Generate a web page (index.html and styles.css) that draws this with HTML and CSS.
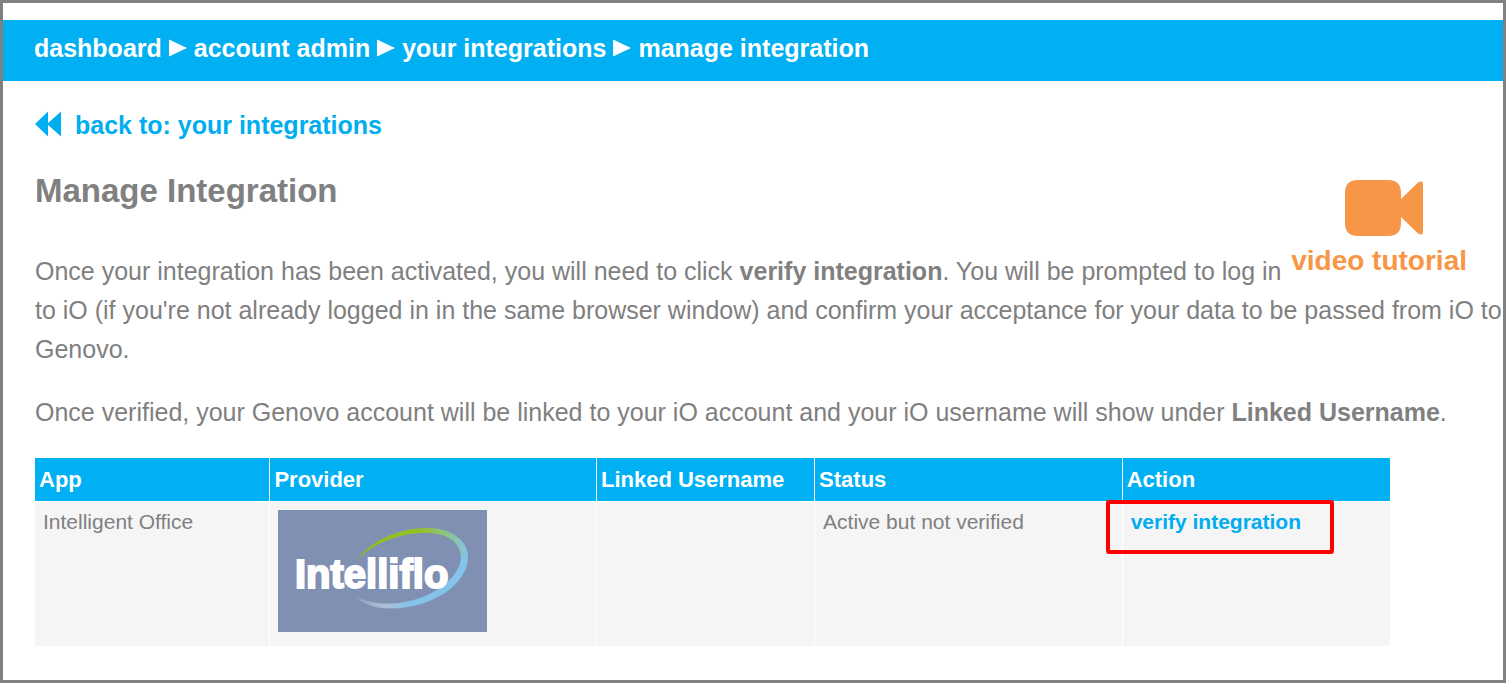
FILE: index.html
```
<!DOCTYPE html>
<html lang="en">
<head>
<meta charset="utf-8">
<title>Manage Integration</title>
<link rel="stylesheet" href="styles.css">
</head>
<body>
<div class="page">
  <nav class="crumbs" aria-label="Breadcrumb">
    <a href="#">dashboard</a>
    <svg class="arrow" viewBox="0 0 18 18" aria-hidden="true"><path d="M0 0.5L18 9L0 17.5Z"/></svg>
    <a href="#">account admin</a>
    <svg class="arrow" viewBox="0 0 18 18" aria-hidden="true"><path d="M0 0.5L18 9L0 17.5Z"/></svg>
    <a href="#">your integrations</a>
    <svg class="arrow" viewBox="0 0 18 18" aria-hidden="true"><path d="M0 0.5L18 9L0 17.5Z"/></svg>
    <a href="#" aria-current="page">manage integration</a>
  </nav>
  <main class="content">
    <a class="back" href="#">
      <svg class="rewind" viewBox="0 0 26 26" aria-hidden="true"><path d="M0 12L13 -0.5V24.500ZM12 12L26 -0.5V24.500Z"/></svg>
      <span>back to: your integrations</span>
    </a>
    <a class="video" href="#">
      <svg class="camera" viewBox="-10 0 88 56" aria-hidden="true"><path d="M13 0H43Q56 0 56 13V19L73 2.500Q78 0 78 4V52Q78 56 73 53.500L56 37V43Q56 56 43 56H13Q0 56 0 43V13Q0 0 13 0Z"/></svg>
      <span>video tutorial</span>
    </a>
    <h1 class="title">Manage Integration</h1>
    <p class="text">Once your integration has been activated, you will need to click <b>verify integration</b>. You will be prompted to log in to iO (if you're not already logged in in the same browser window) and confirm your acceptance for your data to be passed from iO to Genovo.</p>
    <p class="text">Once verified, your Genovo account will be linked to your iO account and your iO username will show under <b>Linked Username</b>.</p>
    <table class="apps">
      <colgroup><col class="col-app"><col class="col-provider"><col class="col-user"><col class="col-status"><col class="col-action"></colgroup>
      <thead>
        <tr><th scope="col">App</th><th scope="col">Provider</th><th scope="col">Linked Username</th><th scope="col">Status</th><th scope="col">Action</th></tr>
      </thead>
      <tbody>
        <tr>
          <td>Intelligent Office</td>
          <td>
            <svg class="logo" viewBox="0 0 209 122" role="img" aria-label="Intelliflo">
              <defs>
                <linearGradient id="swoosh" gradientUnits="userSpaceOnUse" x1="78" y1="0" x2="190" y2="0">
                  <stop offset="0" stop-color="#8fae3c"/><stop offset="0.2" stop-color="#98bd18"/><stop offset="0.6" stop-color="#94c030"/><stop offset="0.85" stop-color="#8cc49a"/><stop offset="1" stop-color="#84c3ea"/>
                </linearGradient>
                <linearGradient id="tail" gradientUnits="userSpaceOnUse" x1="76" y1="0" x2="190" y2="0">
                  <stop offset="0" stop-color="#8b9bbb"/><stop offset="0.25" stop-color="#aebdd6"/><stop offset="0.5" stop-color="#84c3ea"/><stop offset="1" stop-color="#84c3ea"/>
                </linearGradient>
              </defs>
              <rect width="209" height="122" fill="#8090b2"/>
              <path fill="url(#swoosh)" d="M77 52C92 31 120 18 149 18C173 18 190 30 190 47H183C182 32 169 23 149 23C120 23 95 33 77 52Z"/>
              <path fill="url(#tail)" d="M183 46.500H190C190 75 154 98 113 98.500C97 98.500 84 94 77 86C88 92 100 94 114 93.500C150 92 183 69 183 46.500Z"/>
              <text class="logo-text" x="17" y="78">Intelliflo</text>
            </svg>
          </td>
          <td></td>
          <td>Active but not verified</td>
          <td class="action"><span class="highlight"></span><a class="verify" href="#">verify integration</a></td>
        </tr>
      </tbody>
    </table>
  </main>
</div>
</body>
</html>
```
FILE: styles.css
```
* {
  box-sizing: border-box;
}

body {
  margin: 0;
  background: #fff;
  color: #808080;
  font-family: "Liberation Sans", Arial, sans-serif;
  font-size: 25px;
}

a {
  color: #00aeef;
  font-weight: bold;
  text-decoration: none;
}

.page {
  min-height: 100vh;
  padding-top: 17px;
  border: 3px solid #808080;
}

.crumbs {
  display: flex;
  flex-wrap: wrap;
  align-items: center;
  gap: 7px;
  padding: 13px 31px 18px;
  background: #00b0f3;
  line-height: 30px;
}

.crumbs a {
  color: #fff;
}

.arrow {
  width: 18px;
  height: 18px;
  fill: #fff;
}

.content {
  padding: 28px 0 32px 32px;
}

.back {
  display: flex;
  align-items: center;
  gap: 14px;
  width: fit-content;
  line-height: 32px;
}

.rewind {
  width: 26px;
  height: 26px;
  overflow: visible;
  fill: #00aeef;
}

.video {
  display: flex;
  flex-direction: column;
  align-items: center;
  float: right;
  margin: 39px 36px 0 8px;
  color: #f79646;
  font-size: 28px;
  line-height: 30px;
}

.camera {
  width: 88px;
  height: 56px;
  margin-bottom: 10px;
  fill: #f79646;
}

.title {
  margin: 30px 0 41px;
  font-size: 33px;
  line-height: 40px;
}

.text {
  margin: 0 0 24px;
  line-height: 39px;
}

.apps {
  width: 92.3%;
  margin-top: 26px;
  table-layout: fixed;
  border-collapse: separate;
  border-spacing: 0;
  font-size: 21px;
  line-height: 24px;
}

.col-app { width: 17.3%; }
.col-provider { width: 24.1%; }
.col-user { width: 16.1%; }
.col-status { width: 22.7%; }
.col-action { width: 19.8%; }

.apps th {
  padding: 10px 4px 9px;
  background: #00b0f3;
  color: #fff;
  font-size: 22px;
  text-align: left;
}

.apps td {
  padding: 8px 8px 14px;
  border-top: 1px solid #fff;
  background: #f5f5f5;
  vertical-align: top;
}

.apps th + th,
.apps td + td {
  border-left: 1px solid #fff;
}

.logo {
  display: block;
  width: 209px;
  height: 122px;
}

.logo-text {
  fill: #fff;
  stroke: #fff;
  stroke-width: 2px;
  font-size: 40px;
  font-weight: bold;
}

.action {
  position: relative;
}

.highlight {
  position: absolute;
  top: -2px;
  left: -17px;
  width: 228px;
  height: 54px;
  border: 4px solid #f00;
  border-radius: 3px;
  pointer-events: none;
}
```
